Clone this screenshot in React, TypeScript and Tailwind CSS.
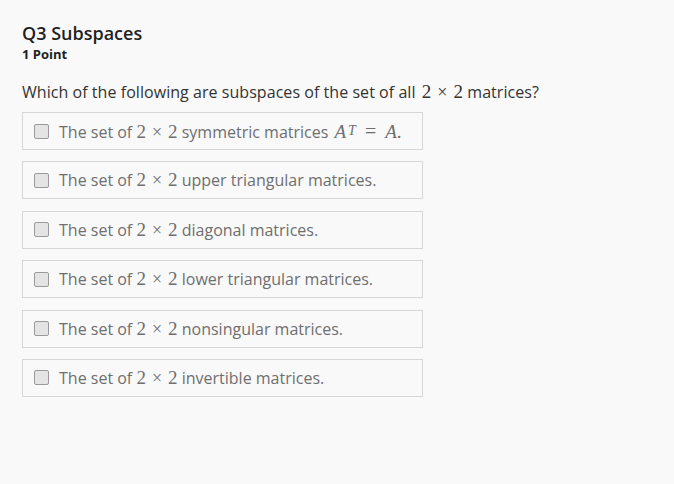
import React from "react";

const serif = "font-['Liberation_Serif','DejaVu_Serif',serif]";

const TwoByTwo = () => (
  <span className={`${serif} text-[19px]`}>
    2<span className="mx-[6px] text-[18px]">×</span>2
  </span>
);

const options: React.ReactNode[] = [
  <>
    The set of <TwoByTwo /> symmetric matrices{" "}
    <span className={`${serif} text-[19px] ml-[2px]`}>
      <span className="italic">A</span>
      <sup className="italic text-[14px] relative top-[-3px] ml-[2px]">T</sup>
      <span className="mx-[9px] text-[20px]">=</span>
      <span className="italic">A</span>.
    </span>
  </>,
  <>The set of <TwoByTwo /> upper triangular matrices.</>,
  <>The set of <TwoByTwo /> diagonal matrices.</>,
  <>The set of <TwoByTwo /> lower triangular matrices.</>,
  <>The set of <TwoByTwo /> nonsingular matrices.</>,
  <>The set of <TwoByTwo /> invertible matrices.</>,
];

export default function App() {
  return (
    <div className="min-h-[484px] w-[674px] bg-[#f9f9f9] font-['Open_Sans',sans-serif] pl-[22px] pt-[20px]">
      <div className="text-[18px] font-semibold leading-[26px] text-[#1f1f1f]">Q3 Subspaces</div>
      <div className="text-[13px] font-bold leading-[16px] text-[#1f1f1f]">1 Point</div>
      <div className="mt-[18px] text-[16px] leading-[24px] tracking-[0.05px] text-[#333333]">
        Which of the following are subspaces of the set of all{" "}
        <span className="ml-[2px]">
          <TwoByTwo />
        </span>{" "}
        matrices?
      </div>
      <div className="mt-[8px] flex flex-col gap-[11.4px]">
        {options.map((o, i) => (
          <div
            key={i}
            className="flex h-[38px] w-[401px] items-center border border-[#d6d6d6] bg-[#f9f9f9] pl-[11px]"
          >
            <span className="mr-[10px] h-[15px] w-[15px] shrink-0 rounded-[2px] border border-[#9a9a9a] bg-[#e4e4e4]" />
            <span className="text-[16px] leading-[24px] text-[#6f6f6f] whitespace-nowrap">{o}</span>
          </div>
        ))}
      </div>
    </div>
  );
}
